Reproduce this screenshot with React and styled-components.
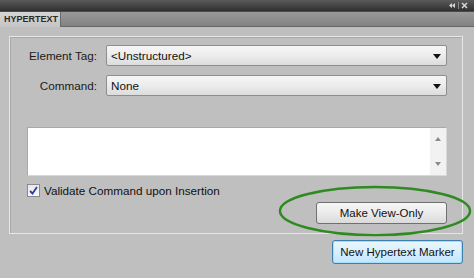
import React from 'react';
import styled, { createGlobalStyle } from 'styled-components';

const GlobalStyle = createGlobalStyle`
  body {
    margin: 0;
    background: #bfbfbf;
    overflow: hidden;
  }
`

const Frame = styled.div`
  width: 474px;
  height: 278px;
  display: flex;
  flex-direction: column;
  background: #bfbfbf;
  font-family: "Liberation Sans", Arial, sans-serif;
  font-size: 11.7px;
  color: #111;
`

const TitleBar = styled.div`
  height: 11px;
  flex: none;
  background: linear-gradient(#5a5a5a, #303030);
  display: flex;
  justify-content: flex-end;
  align-items: center;
  padding-right: 5px;
`

const TabBar = styled.div`
  height: 14px;
  flex: none;
  display: flex;
  background: linear-gradient(#9a9a9a, #828282);
  border-top: 1px solid #4a4a4a;
  border-bottom: 1px solid #666;
`

const Tab = styled.div`
  width: 61px;
  background: linear-gradient(#d6d6d6, #c4c4c4);
  border-right: 1px solid #6a6a6a;
  margin-bottom: -1px;
  padding-left: 4px;
  box-sizing: border-box;
  font-size: 9px;
  font-weight: bold;
  color: #2a2a2a;
  line-height: 15px;
`

const Body = styled.div`
  flex: 1;
  padding: 9px 11px 0 9px;
  display: flex;
  flex-direction: column;
`

const GroupBox = styled.div`
  height: 198px;
  box-sizing: border-box;
  border: 1px solid #e6e6e6;
  box-shadow: inset 1px 1px 0 #a9a9a9;
  padding: 8px 15px 0 17px;
  display: flex;
  flex-direction: column;
`

const FieldRow = styled.div`
  display: flex;
  align-items: center;
  height: 21px;
  margin-bottom: ${p => p.gap || 0}px;
`

const Label = styled.label`
  flex: none;
  width: 79px;
  box-sizing: border-box;
  white-space: nowrap;
  text-align: right;
  padding-right: 9px;
  color: #1a1a1a;
`

const Select = styled.div`
  flex: 1;
  height: 21px;
  box-sizing: border-box;
  border: 1px solid #8e8e8e;
  border-radius: 2px;
  background: linear-gradient(#f6f6f6 0%, #ececec 50%, #dcdcdc 100%);
  display: flex;
  align-items: center;
  justify-content: space-between;
  padding: 0 5px 0 4px;
`

const Arrow = styled.span`
  width: 0;
  height: 0;
  border-left: 4px solid transparent;
  border-right: 4px solid transparent;
  border-top: 5px solid #111;
  margin-top: 2px;
`

const TextArea = styled.div`
  margin-top: 31px;
  height: 49px;
  box-sizing: border-box;
  background: #fff;
  border: 1px solid #a9a9a9;
  border-right-color: #d8d8d8;
  border-bottom-color: #d8d8d8;
  display: flex;
  justify-content: flex-end;
`

const ScrollBar = styled.div`
  width: 16px;
  background: #f2f2f2;
  display: flex;
  flex-direction: column;
  justify-content: space-between;
  align-items: center;
  padding: 9px 0 9px;
`

const ScrollArrow = styled.span`
  width: 0;
  height: 0;
  border-left: 3px solid transparent;
  border-right: 3px solid transparent;
  ${p => p.up ? 'border-bottom: 4px solid #8a8a8a;' : 'border-top: 4px solid #8a8a8a;'}
`

const CheckRow = styled.label`
  display: flex;
  align-items: center;
  margin-top: 7px;
  height: 14px;
  gap: 4px;
`

const CheckBox = styled.span`
  width: 13px;
  height: 13px;
  box-sizing: border-box;
  border: 1px solid #8a8a8a;
  background: linear-gradient(#e8e8e8, #fafafa);
  display: flex;
  align-items: center;
  justify-content: center;
`

const ButtonRow = styled.div`
  display: flex;
  justify-content: flex-end;
  margin-top: ${p => p.top}px;
  padding-right: ${p => p.right || 0}px;
`

const Anchor = styled.div`
  position: relative;
`

const Button = styled.button`
  width: 131px;
  height: 22px;
  box-sizing: border-box;
  border: 1px solid #707070;
  border-radius: 3px;
  background: linear-gradient(#f6f6f6 0%, #ebebeb 50%, #dadada 100%);
  font-family: "Liberation Sans", Arial, sans-serif;
  font-size: 11.5px;
  color: #111;
  padding: 0;
`

const PrimaryButton = styled(Button)`
  height: 24px;
  border-color: #3c7fb1;
  background: linear-gradient(#eaf6fd 0%, #d9f0fc 50%, #bee6fd 100%);
  box-shadow: inset 0 0 0 1px #a8dcf8;
`

const Highlight = styled.svg`
  position: absolute;
  left: -38px;
  top: -17px;
  pointer-events: none;
`

const WindowControls = () => (
  <svg width="20" height="7" viewBox="0 0 20 7">
    <path d="M0 3.5 L3 1 V6 Z M3 3.5 L6 1 V6 Z" fill="#d8d8d8" />
    <rect x="9" y="0" width="1" height="7" fill="#8a8a8a" />
    <path d="M13 1 L18 6 M18 1 L13 6" stroke="#d8d8d8" strokeWidth="1.5" />
  </svg>
)

const Check = () => (
  <svg width="9" height="9" viewBox="0 0 9 9">
    <path d="M1 5 L3.5 7.5 L8 1" fill="none" stroke="#2a3fa0" strokeWidth="1.8" />
  </svg>
)

export default function App() {
  return (
    <Frame>
      <GlobalStyle />
      <TitleBar>
        <WindowControls />
      </TitleBar>
      <TabBar>
        <Tab>HYPERTEXT</Tab>
      </TabBar>
      <Body>
        <GroupBox>
          <FieldRow gap={9}>
            <Label>Element Tag:</Label>
            <Select>
              &lt;Unstructured&gt;
              <Arrow />
            </Select>
          </FieldRow>
          <FieldRow>
            <Label>Command:</Label>
            <Select>
              None
              <Arrow />
            </Select>
          </FieldRow>
          <TextArea>
            <ScrollBar>
              <ScrollArrow up />
              <ScrollArrow />
            </ScrollBar>
          </TextArea>
          <CheckRow>
            <CheckBox><Check /></CheckBox>
            Validate Command upon Insertion
          </CheckRow>
          <ButtonRow top={5}>
            <Anchor>
              <Button>Make View-Only</Button>
              <Highlight width="194" height="52" viewBox="0 0 194 52">
                <ellipse cx="97" cy="26" rx="95" ry="24" fill="none" stroke="#2f8a22" strokeWidth="2.5" />
              </Highlight>
            </Anchor>
          </ButtonRow>
        </GroupBox>
        <ButtonRow top={6} right={-2}>
          <PrimaryButton>New Hypertext Marker</PrimaryButton>
        </ButtonRow>
      </Body>
    </Frame>
  );
}
